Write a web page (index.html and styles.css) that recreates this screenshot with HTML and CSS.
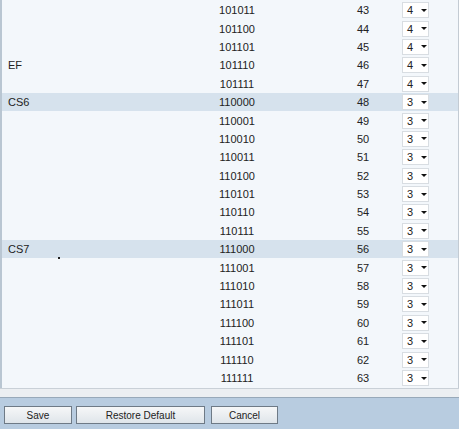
FILE: index.html
```html
<!DOCTYPE html>
<html>
<head>
<meta charset="utf-8">
<link rel="stylesheet" href="styles.css">
</head>
<body>
<div class="page">
  <div class="panel">
    <div class="rows" id="rows"></div>
    <span class="dot"></span>
  </div>
  <div class="band"></div>
  <div class="bar">
    <button class="btn btn-save">Save</button>
    <button class="btn btn-restore">Restore Default</button>
    <button class="btn btn-cancel">Cancel</button>
  </div>
</div>
<script src="app.js"></script>
</body>
</html>
```

FILE: app.js
```js
var labels = {46: "EF", 48: "CS6", 56: "CS7"};
var hl = {48: true, 56: true};
var html = "";
for (var v = 43; v <= 63; v++) {
  var bin = v.toString(2);
  while (bin.length < 6) bin = "0" + bin;
  var q = v < 48 ? 4 : 3;
  html += '<div class="row' + (hl[v] ? ' row-hl' : '') + '">' +
    '<div class="c-name">' + (labels[v] || "") + '</div>' +
    '<div class="c-bin">' + bin + '</div>' +
    '<div class="c-gap"></div>' +
    '<div class="c-num">' + v + '</div>' +
    '<div class="c-sel"><span class="sel"><span class="sel-val">' + q + '</span><span class="sel-arrow"></span></span></div>' +
    '</div>';
}
document.getElementById("rows").innerHTML = html;
```

FILE: styles.css
```css
html, body {
  margin: 0;
  padding: 0;
  background: #ffffff;
}
body {
  font-family: "Liberation Sans", Arial, sans-serif;
  font-size: 11px;
  color: #222;
}
.page {
  width: 459px;
}
.panel {
  position: relative;
  height: 388px;
  box-sizing: border-box;
  background: #f3f7fb;
  border-left: 2px solid #b9c6d2;
  border-right: 1px solid #c3cbd3;
  padding-top: 1px;
}
.rows {
  display: flex;
  flex-direction: column;
}
.row {
  display: grid;
  grid-template-columns: 158px 154px 17px 64px 1fr;
  align-items: center;
  height: 18.4px;
}
.row-hl {
  background: #d6e2ed;
}
.c-name {
  padding-left: 6px;
}
.c-bin, .c-num {
  text-align: center;
}
.c-sel {
  display: flex;
  padding-left: 7px;
}
.sel {
  display: flex;
  align-items: center;
  width: 27px;
  height: 16px;
  box-sizing: border-box;
  background: #ffffff;
  border: 1px solid #d8dde2;
  padding-left: 4px;
}
.sel-val {
  width: 13px;
}
.sel-arrow {
  width: 0;
  height: 0;
  border-left: 3px solid transparent;
  border-right: 3px solid transparent;
  border-top: 3px solid #111;
  margin-left: 1px;
}
.dot {
  position: absolute;
  left: 56px;
  top: 257px;
  width: 2px;
  height: 2px;
  background: #222;
}
.band {
  height: 8px;
  background: #eceff2;
  border-top: 1px solid #c9d0d7;
  border-bottom: 1px solid #98a9b9;
}
.bar {
  height: 31px;
  background: #b8cce0;
  display: flex;
  align-items: flex-start;
  padding: 8px 0 0 4px;
  box-sizing: border-box;
  gap: 4px;
}
.btn {
  height: 18px;
  padding: 0;
  border: 1px solid #6e7a86;
  background: linear-gradient(#f6f7f8, #dfe5ea);
  font-family: "Liberation Sans", Arial, sans-serif;
  font-size: 10px;
  color: #222;
}
.btn-save { width: 68px; }
.btn-restore { width: 129px; }
.btn-cancel { width: 67px; margin-left: 2px; }
```
